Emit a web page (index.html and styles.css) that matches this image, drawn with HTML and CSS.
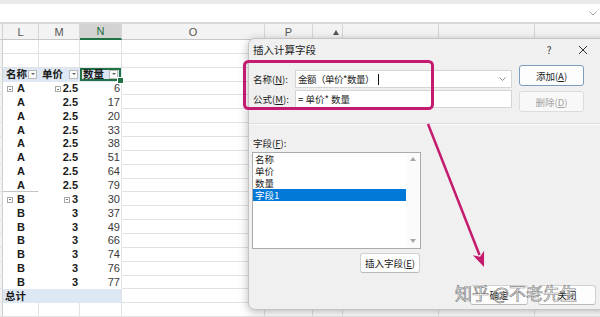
FILE: index.html
```html
<!DOCTYPE html>
<html lang="zh-CN">
<head>
  <meta charset="UTF-8">
  <title>插入计算字段</title>
  <link rel="stylesheet" href="styles.css">
</head>
<body>
<div class="app">
  <div class="topstrip"></div>
  <div class="formula">
    <svg class="chev" width="8" height="5" viewBox="0 0 8 5"><polyline points="0.5,0.5 4,4 7.5,0.5" fill="none" stroke="#a0a0a0" stroke-width="1"/></svg>
  </div>

  <table class="sheet">
    <colgroup>
      <col class="c-rh"><col class="c-l"><col class="c-m"><col class="c-n"><col class="c-o">
      <col class="c-p"><col class="c-q"><col class="c-x"><col class="c-x"><col class="c-x">
    </colgroup>
    <thead>
      <tr>
        <th class="rh"></th><th>L</th><th>M</th><th class="sel">N</th><th>O</th><th>P</th><th class="up"><i class="tri"></i></th><th></th><th></th><th></th>
      </tr>
    </thead>
    <tbody id="rows"></tbody>
  </table>

  <div class="dialog">
    <div class="dlg-title">
      <span class="dlg-name">插入计算字段</span>
      <span class="help">?</span>
      <span class="close"><svg width="10" height="10" viewBox="0 0 10 10"><path d="M1 1L9 9M9 1L1 9" stroke="#333" stroke-width="1"/></svg></span>
    </div>
    <div class="dlg-top">
      <div class="form">
        <div class="frow">
          <label>名称(<u>N</u>):</label>
          <div class="input combo">
            <span class="tight">金额（单价*数量）</span><i class="caret"></i>
            <svg class="combo-chev" width="7" height="4" viewBox="0 0 7 4"><polyline points="0.5,0.5 3.5,3.5 6.5,0.5" fill="none" stroke="#8a8a8a" stroke-width="1"/></svg>
          </div>
        </div>
        <div class="frow">
          <label>公式(<u>M</u>):</label>
          <div class="input"><span>= 单价* 数量</span></div>
        </div>
      </div>
      <div class="side">
        <button class="btn default">添加(<u>A</u>)</button>
        <button class="btn" disabled>删除(<u>D</u>)</button>
      </div>
    </div>
    <div class="sep"></div>
    <div class="list-label">字段(<u>F</u>):</div>
    <div class="listbox">
      <ul class="items">
        <li>名称</li>
        <li>单价</li>
        <li>数量</li>
        <li class="on">字段1</li>
      </ul>
      <div class="vscroll"><i class="arr-up"></i><i class="arr-down"></i></div>
    </div>
    <button class="btn insert">插入字段(<u>E</u>)</button>
    <div class="dlg-foot">
      <button class="btn">确定</button>
      <button class="btn">关闭</button>
    </div>
  </div>

  <svg class="marks" width="600" height="317" viewBox="0 0 600 317">
    <rect x="244.5" y="61.5" width="188" height="47" rx="4" fill="none" stroke="#c51b6f" stroke-width="3"/>
    <line x1="428" y1="124" x2="479.5" y2="255" stroke="#c51b6f" stroke-width="2.5"/>
    <polygon points="484,267 484.1,250.8 480,256.8 472.9,255.2" fill="#c51b6f"/>
  </svg>
  <div class="watermark">知乎 @不老先生</div>
</div>

<script>
  const groups = [
    { name: 'A', price: '2.5', qty: [6, 17, 20, 33, 38, 51, 64, 79] },
    { name: 'B', price: '3', qty: [30, 37, 49, 66, 74, 76, 77] }
  ];
  const tbody = document.getElementById('rows');
  const rest = '<td></td>'.repeat(6);
  const blank = '<td></td><td></td><td></td>';

  function addRow(cells) {
    const tr = document.createElement('tr');
    tr.innerHTML = '<td class="rh"></td>' + cells + rest;
    tbody.appendChild(tr);
  }

  function headCell(text, extra) {
    return '<td class="pv hd' + (extra || '') + '"><div class="hcell"><span>' + text + '</span><i class="dd"></i></div></td>';
  }

  addRow(blank);
  addRow(blank);
  addRow(headCell('名称') + headCell('单价') + headCell('数量', ' active'));

  groups.forEach((g, gi) => {
    g.qty.forEach((q, i) => {
      const first = i === 0;
      const mark = first ? '<i class="mi"></i>' : '';
      // pivot draws a line under the first group's labels
      const end = (gi === 0 && i === g.qty.length - 1) ? ' end' : '';
      addRow('<td class="pv k' + (first ? ' first' : '') + end + '">' + mark + g.name + '</td>' +
             '<td class="pv v">' + mark + g.price + '</td>' +
             '<td class="pv n">' + q + '</td>');
    });
  });

  addRow('<td class="pv tot">总计</td><td class="pv tot"></td><td class="pv tot last"></td>');
  addRow(blank);
</script>
</body>
</html>
```

FILE: styles.css
```css
* {
  box-sizing: border-box;
}
body {
  margin: 0;
  background: #fff;
  font-family: "Liberation Sans", "Noto Sans CJK SC", sans-serif;
}
.app {
  position: relative;
  width: 600px;
  height: 317px;
  overflow: hidden;
  background: #fff;
}
.topstrip {
  height: 4px;
  background: #e9e9e9;
}
.formula {
  height: 20px;
  background: #fff;
  border-bottom: 2px solid #d9d9d9;
  display: flex;
  align-items: center;
  justify-content: flex-end;
  padding-right: 3px;
}

/* sheet */
.sheet {
  border-collapse: separate;
  border-spacing: 0;
  table-layout: fixed;
  width: 631px;
  font-size: 11px;
  color: #1a1a1a;
}
.c-rh { width: 3px; }
.c-l { width: 36px; }
.c-m { width: 41px; }
.c-n { width: 42px; }
.c-o { width: 143px; }
.c-p { width: 48px; }
.c-q { width: 30px; }
.c-x { width: 96px; }
.sheet thead tr {
  height: 16px;
}
.sheet th {
  padding: 0;
  background: #f3f3f3;
  border-right: 1px solid #d6d6d6;
  border-bottom: 1px solid #c8c8c8;
  font-weight: normal;
  color: #555;
  font-size: 11px;
  line-height: 14px;
  text-align: center;
}
.sheet th.sel {
  background: #d3d3d3;
  color: #1e6b41;
  border-bottom: 2px solid #217346;
}
.sheet th.up {
  text-align: right;
  padding-right: 3px;
}
.tri {
  display: inline-block;
  border-left: 3px solid transparent;
  border-right: 3px solid transparent;
  border-bottom: 5px solid #555;
  vertical-align: 1px;
}
.sheet tbody tr {
  height: 13.87px;
}
.sheet td {
  padding: 0 2px;
  border-right: 1px solid #e2e2e2;
  border-bottom: 1px solid #e2e2e2;
  line-height: 12px;
  white-space: nowrap;
  overflow: hidden;
}
.sheet .rh {
  padding: 0;
  background: #f3f3f3;
  border-right-color: #cfcfcf;
}

/* pivot */
.sheet td.pv {
  background: #fff;
  border-right-color: #fff;
  border-bottom-color: #fff;
}
.sheet td.n {
  border-right-color: #e2e2e2;
  text-align: right;
  padding-right: 1px;
  color: #3a3a3a;
}
.sheet td.k {
  font-weight: bold;
  padding-left: 14px;
}
.sheet td.k.first {
  padding-left: 4px;
}
.sheet td.v {
  font-weight: bold;
  text-align: right;
  padding-right: 1px;
}
.sheet td.end {
  border-bottom-color: #c4c4c4;
}
.sheet td.hd,
.sheet td.tot {
  background: #dde8f4;
  border-right-color: #dde8f4;
  border-bottom-color: #dde8f4;
  font-weight: bold;
}
.sheet td.hd {
  padding: 0 1px 0 3px;
  font-size: 10.5px;
}
.sheet td.tot {
  font-size: 10.5px;
}
.sheet td.last {
  border-right-color: #e2e2e2;
}
.sheet td.active {
  position: relative;
  overflow: visible;
  box-shadow: inset 0 0 0 2px #217346;
  padding-right: 3px;
}
.sheet td.active::after {
  content: "";
  position: absolute;
  right: -3px;
  bottom: -3px;
  width: 5px;
  height: 5px;
  background: #217346;
  border: 1px solid #fff;
}
.hcell {
  display: flex;
  align-items: center;
  justify-content: space-between;
}
.dd {
  display: flex;
  align-items: center;
  justify-content: center;
  width: 9px;
  height: 9px;
  border: 1px solid #bcbcbc;
  background: #fafafa;
}
.dd::after {
  content: "";
  border-left: 2px solid transparent;
  border-right: 2px solid transparent;
  border-top: 2px solid #666;
}
.mi {
  display: inline-block;
  width: 6px;
  height: 6px;
  margin-right: 2px;
  border: 1px solid #a8a8a8;
  background: linear-gradient(#777, #777) center / 2px 1px no-repeat;
}
.k .mi {
  margin-right: 4px;
}

/* dialog */
.dialog {
  position: absolute;
  left: 248px;
  top: 38px;
  width: 362px;
  height: 272px;
  background: #f0f0f0;
  border: 1px solid #c4c4c4;
  border-radius: 7px;
  box-shadow: 0 2px 10px rgba(0, 0, 0, 0.28);
  font-family: "Noto Sans CJK SC", "Liberation Sans", sans-serif;
  font-size: 9.5px;
  color: #1a1a1a;
}
.dlg-title {
  display: flex;
  align-items: center;
  height: 21px;
  padding: 0 11px 0 4px;
}
.dlg-name {
  flex: 1;
  font-size: 10.5px;
}
.help {
  width: 20px;
  text-align: center;
  font-size: 10px;
  color: #333;
}
.close {
  width: 30px;
  margin-left: 9px;
  display: flex;
  justify-content: center;
}
.dlg-top {
  display: flex;
  padding-top: 5px;
}
.form {
  width: 263px;
  padding: 5px 0 0 4px;
}
.frow {
  display: flex;
  align-items: center;
  height: 18px;
  margin-bottom: 2px;
}
.frow label {
  width: 42px;
}
.input {
  width: 217px;
  height: 18px;
  background: #fff;
  border: 1px solid #d4d4d4;
  display: flex;
  align-items: center;
  padding-left: 2px;
  white-space: nowrap;
}
.input .tight {
  letter-spacing: -0.5px;
}
.caret {
  width: 1px;
  height: 11px;
  margin-left: 4px;
  background: #111;
}
.combo-chev {
  margin-left: auto;
  margin-right: 5px;
}
.side {
  margin-left: 7px;
  width: 65px;
  display: flex;
  flex-direction: column;
  gap: 5px;
}
.btn {
  font: inherit;
  font-size: 9.5px;
  color: #1a1a1a;
  background: #fdfdfd;
  border: 1px solid #d0d0d0;
  border-bottom-color: #b9b9b9;
  border-radius: 3px;
  padding: 0;
  height: 21px;
}
.btn.default {
  border-color: #7d9cc0;
}
.btn:disabled {
  color: #a3a3a3;
  background: #f8f8f8;
  border-color: #dcdcdc;
}
.sep {
  margin-top: 11px;
  border-top: 1px solid #dcdcdc;
  border-bottom: 1px solid #fafafa;
}
.list-label {
  margin: 11px 0 0 4px;
  line-height: 14px;
}
.listbox {
  display: flex;
  margin: 2px 0 0 3px;
  width: 169px;
  height: 97px;
  border: 1px solid #ababab;
  background: #fff;
}
.items {
  flex: 1;
  margin: 0;
  padding: 0;
  list-style: none;
}
.items li {
  height: 12px;
  line-height: 12px;
  padding-left: 2px;
}
.items li.on {
  background: #0078d7;
  color: #fff;
}
.vscroll {
  width: 14px;
  display: flex;
  flex-direction: column;
  justify-content: space-between;
  align-items: center;
  padding: 4px 0 5px;
  background: #fbfbfb;
}
.arr-up {
  border-left: 3px solid transparent;
  border-right: 3px solid transparent;
  border-bottom: 4px solid #a8a8a8;
}
.arr-down {
  border-left: 3px solid transparent;
  border-right: 3px solid transparent;
  border-top: 4px solid #a8a8a8;
}
.btn.insert {
  display: block;
  margin: 4px 0 0 111px;
  width: 60px;
  height: 20px;
}
.dlg-foot {
  display: flex;
  gap: 10px;
  margin-top: 12px;
  padding-left: 221px;
}
.dlg-foot .btn {
  width: 58px;
  height: 20px;
}

/* annotations */
.marks {
  position: absolute;
  left: 0;
  top: 0;
  pointer-events: none;
}
.watermark {
  position: absolute;
  left: 455px;
  top: 282px;
  font-family: "Noto Sans CJK SC", sans-serif;
  font-size: 17px;
  line-height: 22px;
  white-space: nowrap;
  color: rgba(255, 255, 255, 0.7);
  -webkit-text-stroke: 0.7px rgba(90, 90, 90, 0.75);
  pointer-events: none;
}
```
